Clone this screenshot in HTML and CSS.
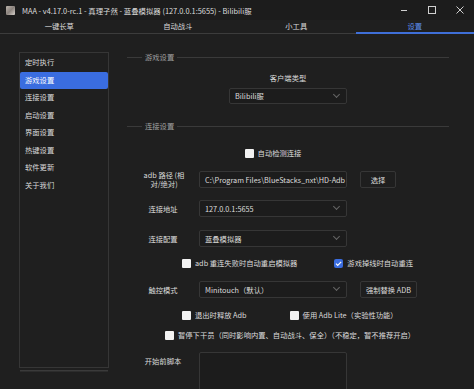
FILE: index.html
```html
<!DOCTYPE html>
<html lang="zh">
<head>
<meta charset="utf-8">
<link rel="stylesheet" href="styles.css">
</head>
<body>
<div class="window">
  <div class="titlebar">
    <span class="appicon"></span>
    <span class="title">MAA - v4.17.0-rc.1 - 真理子然 - 蓝叠模拟器 (127.0.0.1:5655) - Bilibili服</span>
    <div class="controls">
      <span class="ctl"><svg width="8" height="8" viewBox="0 0 8 8"><path d="M1 4.5h6" stroke="#cfcfcf" stroke-width="1"/></svg></span>
      <span class="ctl"><svg width="8" height="8" viewBox="0 0 8 8"><rect x="0.5" y="0.5" width="7" height="7" fill="none" stroke="#cfcfcf" stroke-width="1"/></svg></span>
      <span class="ctl"><svg width="8" height="8" viewBox="0 0 8 8"><path d="M0.5 0.5l7 7M7.5 0.5l-7 7" stroke="#cfcfcf" stroke-width="1"/></svg></span>
    </div>
  </div>
  <div class="tabs">
    <div class="tab">一键长草</div>
    <div class="tab">自动战斗</div>
    <div class="tab">小工具</div>
    <div class="tab active">设置</div>
  </div>
  <div class="main">
    <div class="navwrap">
      <nav class="nav">
        <div class="nav-item">定时执行</div>
        <div class="nav-item selected">游戏设置</div>
        <div class="nav-item">连接设置</div>
        <div class="nav-item">启动设置</div>
        <div class="nav-item">界面设置</div>
        <div class="nav-item">热键设置</div>
        <div class="nav-item">软件更新</div>
        <div class="nav-item">关于我们</div>
      </nav>
      <div class="navbar-h"></div>
    </div>
    <div class="content">
      <section class="group">
        <div class="group-head"><span class="line-l"></span><span class="gtitle">游戏设置</span><span class="line-r"></span></div>
        <div class="client-label">客户端类型</div>
        <div class="select client-select"><span>Bilibili服</span><span class="chev"></span></div>
      </section>
      <section class="group g2">
        <div class="group-head"><span class="line-l"></span><span class="gtitle">连接设置</span><span class="line-r"></span></div>
        <div class="form">
          <div class="row r-auto">
            <label class="check auto-check"><span class="box"></span>自动检测连接</label>
          </div>
          <div class="row r-adb">
            <div class="lbl two"><span>adb 路径 (相</span><span>对/绝对)</span></div>
            <div class="input">C:\Program Files\BlueStacks_nxt\HD-Adb</div>
            <div class="btn btn-sel">选择</div>
          </div>
          <div class="row r-addr">
            <div class="lbl">连接地址</div>
            <div class="select"><span>127.0.0.1:5655</span><span class="chev"></span></div>
          </div>
          <div class="row r-cfg">
            <div class="lbl">连接配置</div>
            <div class="select"><span>蓝叠模拟器</span><span class="chev"></span></div>
          </div>
          <div class="crow c1">
            <label class="check"><span class="box"></span>adb 重连失败时自动重启模拟器</label>
            <label class="check"><span class="box on"><svg width="9" height="9" viewBox="0 0 9 9"><path d="M2 4.6l1.7 1.7L7.2 2.8" fill="none" stroke="#fff" stroke-width="1.2"/></svg></span>游戏掉线时自动重连</label>
          </div>
          <div class="row r-touch">
            <div class="lbl">触控模式</div>
            <div class="select"><span>Minitouch（默认）</span><span class="chev"></span></div>
            <div class="btn btn-adb">强制替换 ADB</div>
          </div>
          <div class="crow c2">
            <label class="check"><span class="box"></span>退出时释放 Adb</label>
            <label class="check"><span class="box"></span>使用 Adb Lite（实验性功能）</label>
          </div>
          <div class="crow c3">
            <label class="check"><span class="box"></span>暂停下干员（同时影响内置、自动战斗、保全）（不稳定，暂不推荐开启）</label>
          </div>
          <div class="row r-script">
            <div class="lbl top">开始前脚本</div>
            <div class="input area"></div>
          </div>
        </div>
      </section>
    </div>
  </div>
</div>
</body>
</html>
```

FILE: styles.css
```css
* { box-sizing: border-box; }
html, body { margin: 0; padding: 0; }
body {
  background: #1f1f1f;
  color: #dcdcdc;
  font-family: "Noto Sans CJK SC", "Noto Sans", sans-serif;
  font-size: 7.3px;
  width: 474px;
  height: 389px;
  overflow: hidden;
}
.window { width: 474px; height: 389px; display: flex; flex-direction: column; overflow: hidden; }

.titlebar {
  height: 20px;
  display: flex;
  align-items: center;
  padding-left: 6px;
  background: #1c1c1c;
}
.appicon {
  width: 9px; height: 9px;
  background: linear-gradient(135deg, #bdb5ad 0%, #8a827c 50%, #d6d0ca 100%);
  border-radius: 1px;
  margin-right: 7px;
}
.title { color: #dcdcdc; font-size: 7.4px; white-space: nowrap; }
.controls { margin-left: auto; display: flex; height: 20px; }
.ctl { width: 28px; display: flex; align-items: center; justify-content: center; }

.tabs {
  display: grid;
  grid-template-columns: repeat(4, 1fr);
  height: 14px;
}
.tab {
  height: 14px;
  line-height: 13px;
  text-align: center;
  border-bottom: 1px solid #3c3c3c;
  color: #dadada;
}
.tab.active { color: #5d8ff0; border-bottom: 2px solid #3f6fd8; line-height: 12px; }

.main { flex: 1; display: flex; min-height: 0; }
.navwrap {
  margin-left: 19px;
  margin-top: 18px;
  width: 90px;
  display: flex;
  flex-direction: column;
  gap: 2px;
}
.nav {
  height: 316px;
  border: 1px solid #363636;
  padding: 1px 0;
}
.nav-item {
  height: 17.5px;
  line-height: 17.5px;
  padding-left: 5px;
  color: #dadada;
  border-radius: 2px;
}
.nav-item.selected { background: #3a6de0; color: #fff; }
.navbar-h { height: 2px; margin: 0 1px; background: #2c2c2c; border-top: 1px solid #3a3a3a; }

.content { margin-left: 18px; width: 322px; display: flex; flex-direction: column; }
.group-head { display: flex; align-items: center; height: 10px; margin-top: 18px; }
.group-head .line-l { width: 15px; height: 1px; background: #3a3a3a; }
.group-head .gtitle { color: #a0a0a0; padding: 0 3px; line-height: 10px; }
.group-head .line-r { flex: 1; height: 1px; background: #3a3a3a; }
.g2 .group-head { margin-top: 17px; }

.client-label { text-align: center; margin-top: 10px; line-height: 12px; }
.select, .input {
  height: 17px;
  border: 1px solid #363636;
  background: #1c1c1c;
  border-radius: 2px;
  display: flex;
  align-items: center;
  padding-left: 5px;
  white-space: nowrap;
  overflow: hidden;
  color: #dcdcdc;
}
.client-select { width: 118px; margin: 4px auto 0; height: 16px; }
.chev {
  margin-left: auto;
  margin-right: 7px;
  width: 5px; height: 5px;
  border-right: 1px solid #666;
  border-bottom: 1px solid #666;
  transform: translateY(-2px) rotate(45deg);
}

.form { display: flex; flex-direction: column; }
.row {
  display: grid;
  grid-template-columns: 72px 148px 13px auto;
  align-items: center;
}
.row .lbl { grid-column: 1; text-align: center; line-height: 12px; }
.row .lbl.two {
  display: flex; flex-direction: column; align-items: center;
  line-height: 9px; height: 17px; justify-content: center; padding-left: 2px;
}
.row .input, .row .select { grid-column: 2; }
.row .btn { grid-column: 4; justify-self: start; }
.btn {
  height: 17px;
  border: 1px solid #363636;
  background: #1e1e1e;
  border-radius: 2px;
  display: flex; align-items: center; justify-content: center;
  color: #dcdcdc;
  white-space: nowrap;
}
.btn-sel { width: 36px; }
.btn-adb { width: 57px; }

.r-auto { margin-top: 16px; height: 12px; }
.r-auto .auto-check { grid-column: 2; justify-self: center; }
.r-adb { margin-top: 12px; }
.r-addr { margin-top: 12px; }
.r-cfg { margin-top: 13px; }
.r-touch { margin-top: 12px; }
.r-script { margin-top: 11px; align-items: start; }
.r-script .lbl.top { padding-top: 3px; }
.input.area { height: 40px; }

.check { display: flex; align-items: center; gap: 4px; white-space: nowrap; line-height: 12px; color: #dcdcdc; }
.box {
  width: 9px; height: 9px;
  background: #f2f2f2;
  border-radius: 1px;
  flex: none;
  display: flex;
}
.box.on { background: #3a6de0; border-radius: 2px; }

.crow { display: flex; height: 12px; align-items: center; }
.c1 { margin-top: 10px; padding-left: 55px; gap: 37px; }
.c2 { margin-top: 11px; padding-left: 55px; gap: 43px; }
.c3 { margin-top: 8px; padding-left: 38px; }
```
